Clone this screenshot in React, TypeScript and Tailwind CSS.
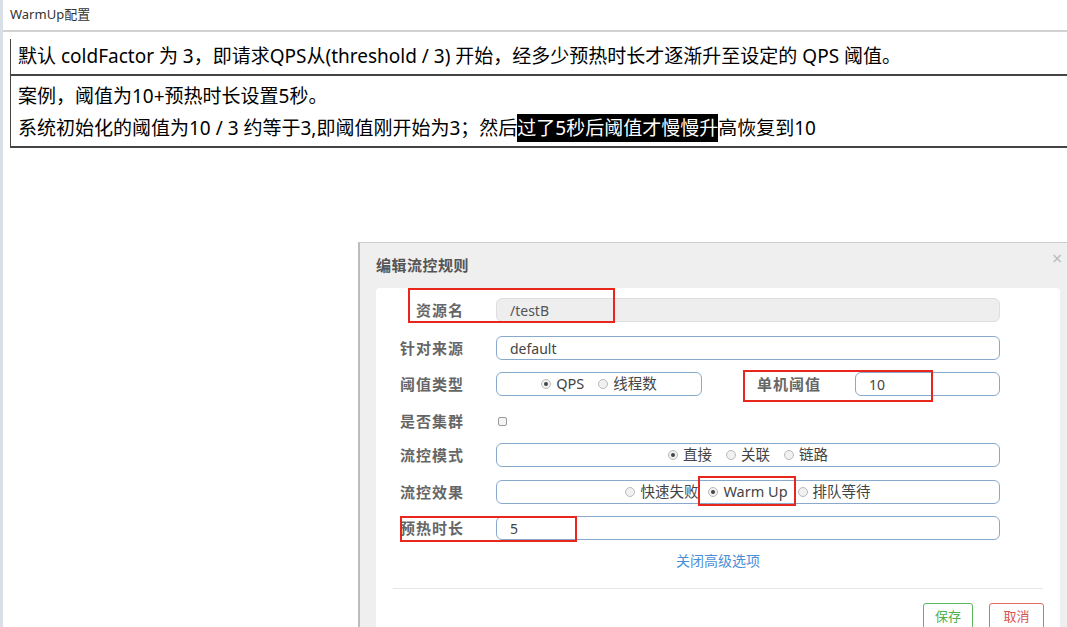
import React from "react";

const font = "font-['Noto_Sans','Noto_Sans_CJK_SC',sans-serif]";

function Radio({ checked, label }: { checked?: boolean; label: string }) {
  return (
    <span className="flex items-center gap-[5px]">
      <span className="flex h-[10px] w-[10px] items-center justify-center rounded-full border border-[#b9b9b9] bg-[#f1f1f1]">
        {checked && <span className="h-[4px] w-[4px] rounded-full bg-[#444]" />}
      </span>
      <span>{label}</span>
    </span>
  );
}

function Label({ text, className = "" }: { text: string; className?: string }) {
  return (
    <div className={`shrink-0 text-right text-[15px] font-semibold tracking-[1px] text-[#666] ${className}`}>{text}</div>
  );
}

function Box({ children, className = "" }: { children?: React.ReactNode; className?: string }) {
  return (
    <div className={`flex h-[24px] items-center rounded-[6px] border border-[#87a9cc] bg-white text-[14.5px] text-[#444] ${className}`}>
      {children}
    </div>
  );
}

function RedBox({ className }: { className: string }) {
  return <div className={`pointer-events-none absolute border-2 border-[#e9261b] ${className}`} />;
}

export default function App() {
  return (
    <div className={`flex h-[627px] w-[1067px] overflow-hidden bg-white ${font}`}>
      <div className="w-[3px] shrink-0 bg-[#d9dfe6]" />
      <div className="flex min-w-0 flex-1 flex-col">
        <div className="flex h-[30px] shrink-0 items-center pl-[7px] text-[13px] text-[#333]">WarmUp配置</div>
        <div className="h-[2px] shrink-0 bg-[#d2d2d2]" />

        <div className="ml-[7px] mt-[7px] shrink-0 border-b-2 border-l border-[#444] text-[19px] text-black">
          <div className="flex h-[37px] items-center border-b-2 border-[#444] pl-[7px]">
            默认 coldFactor 为 3，即请求QPS从(threshold / 3) 开始，经多少预热时长才逐渐升至设定的 QPS 阈值。
          </div>
          <div className="pb-[2px] pl-[7px] pt-[4px]">
            <div className="flex h-[32px] items-center">案例，阈值为10+预热时长设置5秒。</div>
            <div className="flex h-[32px] items-center whitespace-pre">
              系统初始化的阈值为10 / 3 约等于3,即阈值刚开始为3；然后
              <span className="bg-black text-white">过了5秒后阈值才慢慢升</span>
              高恢复到10
            </div>
          </div>
        </div>

        <div className="relative ml-[355px] mt-[94px] flex h-[386px] w-[720px] shrink-0 flex-col border border-b-0 border-l-2 border-[#cdcdcd] border-l-[#bdbdbd] bg-[#efefef]">
          <div className="flex h-[45px] shrink-0 items-center pl-[16px] text-[15px] font-semibold tracking-[0.5px] text-[#555]">编辑流控规则</div>
          <span className="absolute left-[692px] top-[2px] text-[18px] text-[#bbb]">×</span>

          <div className="relative ml-[16px] w-[684px] flex-1 rounded-t-[4px] bg-white pt-[10px]">
            <div className="flex items-center">
              <Label text="资源名" className="w-[88px]" />
              <div className="ml-[32px] flex h-[24px] w-[504px] items-center rounded-[6px] border border-[#dedede] bg-[#eeeeee] pl-[13px] text-[14px] text-[#555]">
                /testB
              </div>
            </div>

            <div className="mt-[14px] flex items-center">
              <Label text="针对来源" className="w-[88px]" />
              <Box className="ml-[32px] w-[504px] pl-[13px] text-[14px]">default</Box>
            </div>

            <div className="mt-[12px] flex items-center">
              <Label text="阈值类型" className="w-[88px]" />
              <Box className="ml-[32px] w-[206px] justify-center gap-[14px]">
                <Radio checked label="QPS" />
                <Radio label="线程数" />
              </Box>
              <Label text="单机阈值" className="w-[119px]" />
              <Box className="ml-[34px] w-[145px] pl-[13px] text-[14px]">10</Box>
            </div>

            <div className="mt-[13px] flex h-[24px] items-center">
              <Label text="是否集群" className="w-[88px]" />
              <span className="ml-[34px] h-[9px] w-[9px] rounded-[2px] border border-[#9a9a9a] bg-[#f4f4f4]" />
            </div>

            <div className="mt-[10px] flex items-center">
              <Label text="流控模式" className="w-[88px]" />
              <Box className="ml-[32px] w-[504px] justify-center gap-[14px]">
                <Radio checked label="直接" />
                <Radio label="关联" />
                <Radio label="链路" />
              </Box>
            </div>

            <div className="mt-[13px] flex items-center">
              <Label text="流控效果" className="w-[88px]" />
              <Box className="ml-[32px] w-[504px] justify-center gap-[10px]">
                <Radio label="快速失败" />
                <Radio checked label="Warm Up" />
                <Radio label="排队等待" />
              </Box>
            </div>

            <div className="mt-[12px] flex items-center">
              <Label text="预热时长" className="w-[88px]" />
              <Box className="ml-[32px] w-[504px] pl-[13px] text-[14px]">5</Box>
            </div>

            <div className="mt-[10px] flex h-[20px] items-center justify-center text-[14px] text-[#4a8fd6]">关闭高级选项</div>

            <div className="mx-[17px] mt-[18px] h-px bg-[#e6e6e6]" />

            <div className="mt-[14px] flex justify-end gap-[16px] pr-[16px]">
              <button type="button" className="h-[28px] w-[50px] rounded-[3px] border border-[#5cb85c] bg-white text-[13px] text-[#4cae4c]">
                保存
              </button>
              <button type="button" className="h-[28px] w-[55px] rounded-[3px] border border-[#e06a66] bg-white text-[13px] text-[#d9534f]">
                取消
              </button>
            </div>

            <RedBox className="left-[32px] top-0 h-[35px] w-[207px]" />
            <RedBox className="left-[367px] top-[82px] h-[32px] w-[190px]" />
            <RedBox className="left-[322px] top-[188px] h-[30px] w-[98px]" />
            <RedBox className="left-[24px] top-[228px] h-[26px] w-[177px]" />
          </div>
        </div>
      </div>
    </div>
  );
}
